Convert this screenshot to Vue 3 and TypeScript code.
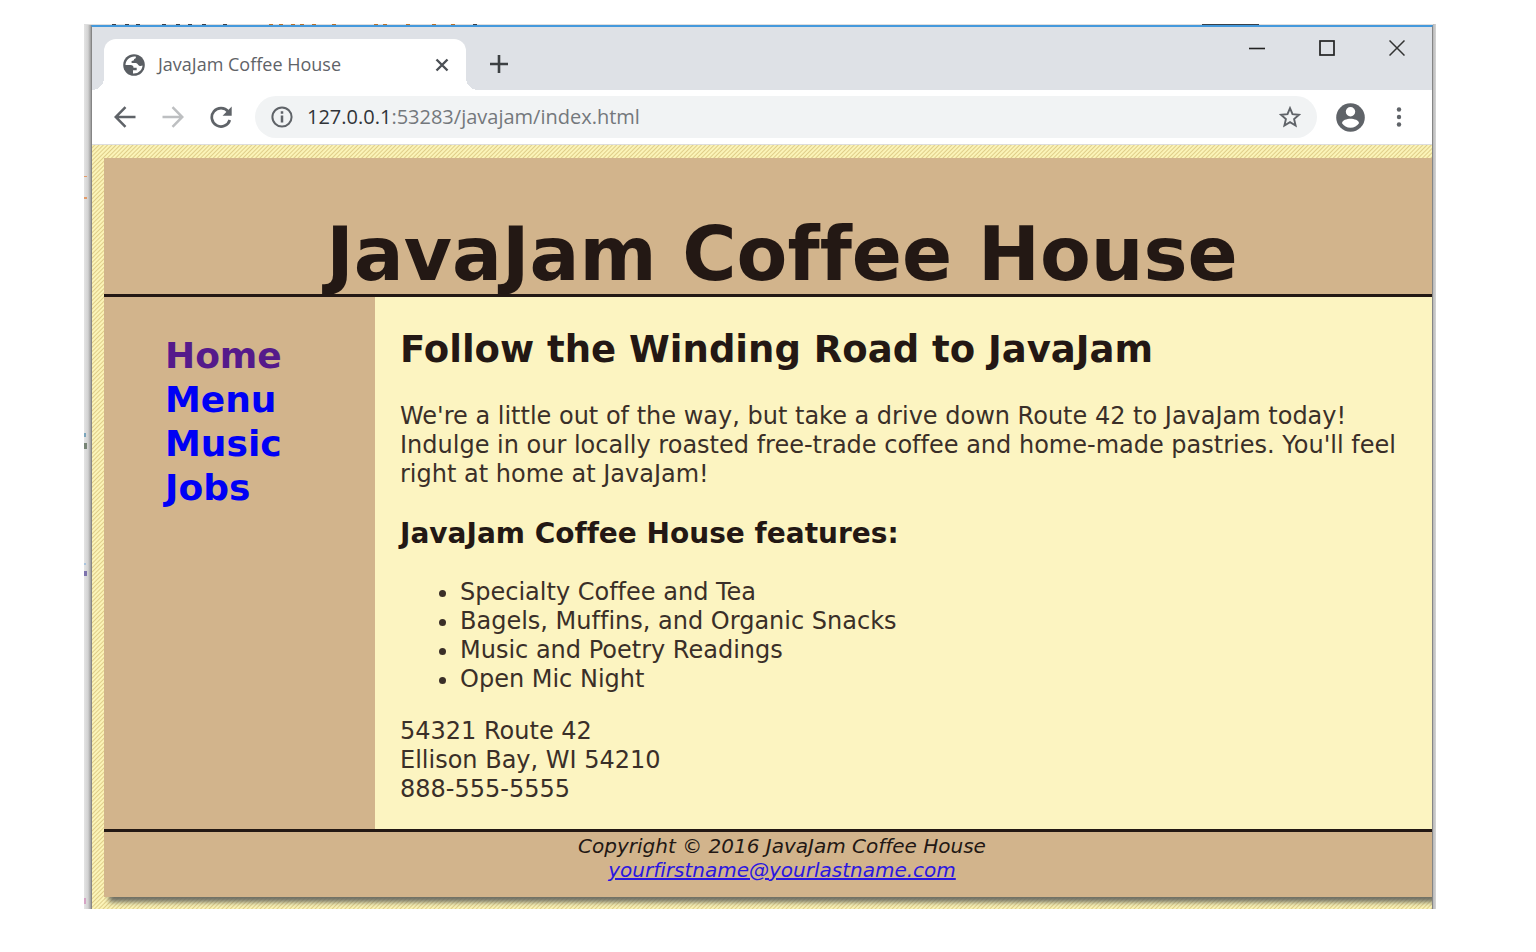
<script setup lang="ts">
interface Fragment { x: number; y: number; w: number; h: number; color: string }

const navLinks = [
  { label: 'Home', visited: true },
  { label: 'Menu', visited: false },
  { label: 'Music', visited: false },
  { label: 'Jobs', visited: false },
]
const features = [
  'Specialty Coffee and Tea',
  'Bagels, Muffins, and Organic Snacks',
  'Music and Poetry Readings',
  'Open Mic Night',
]
const topFragments: Fragment[] = [
  ...[28, 41, 52, 78, 92, 104, 118, 139, 389].map((x) => ({ x, y: 0, w: 4, h: 2, color: '#3b3f46' })),
  ...[185, 195, 207, 216, 228, 248, 290, 299, 322, 348, 367].map((x) => ({ x, y: 0, w: 4, h: 2, color: '#b8712a' })),
]
const sideFragments: Fragment[] = [
  { x: 0, y: 152, w: 3, h: 1, color: '#e39a68' },
  { x: 0, y: 173, w: 3, h: 2, color: '#e39a68' },
  { x: 0, y: 409, w: 2, h: 4, color: '#7ba5bb' },
  { x: 0, y: 419, w: 3, h: 6, color: '#778475' },
  { x: 0, y: 539, w: 2, h: 2, color: '#a9c4de' },
  { x: 0, y: 547, w: 3, h: 5, color: '#7d73ad' },
  { x: 0, y: 874, w: 2, h: 6, color: '#d5a3c4' },
]
</script>

<template>
  <div class="desktop">
    <svg class="behind" aria-hidden="true">
      <rect v-for="(f, i) in sideFragments" :key="i" :x="f.x" :y="f.y" :width="f.w" :height="f.h" :fill="f.color" />
    </svg>
    <div class="sliver">
      <svg width="480" height="2" aria-hidden="true">
        <rect v-for="(f, i) in topFragments" :key="i" :x="f.x" :y="f.y" :width="f.w" :height="f.h" :fill="f.color" />
      </svg>
      <span class="sliver-dark"></span>
    </div>
    <div class="window">
      <header class="tabstrip">
        <div class="tab">
          <svg width="22" height="22" viewBox="0 0 22 22" aria-hidden="true">
            <circle cx="11" cy="11" r="10.8" fill="#5a5e63" />
            <path d="M13 2.700C7.500 1.800 2.600 5.800 2.500 11H7.500c2 0 3 1 3 2.800h3.200v2.500H10v3.200c5.300.4 9.400-3.500 9.500-8-1.600.8-3.400.6-4.400-.8-1-1.400-2-1.600-3.600-1.600H8.600V6.900c1.900 0 2.600-.6 2.500-1.900 1 0 1.800-1 1.900-2.300Z" fill="#fff" />
          </svg>
          <span class="tab-title">JavaJam Coffee House</span>
          <button class="icon" aria-label="Close tab">
            <svg width="14" height="14" viewBox="0 0 14 14"><path d="M1.500 1.500l11 11M12.500 1.500l-11 11" stroke="#4c5055" stroke-width="2.400" /></svg>
          </button>
        </div>
        <button class="icon new-tab" aria-label="New tab">
          <svg width="18" height="18" viewBox="0 0 18 18"><path d="M9 0v18M0 9h18" stroke="#3c4043" stroke-width="2.600" /></svg>
        </button>
        <div class="controls">
          <button class="icon" aria-label="Minimize">
            <svg width="16" height="16" viewBox="0 0 16 16"><path d="M0 8.500h16" stroke="#222" stroke-width="1.600" /></svg>
          </button>
          <button class="icon" aria-label="Maximize">
            <svg width="16" height="16" viewBox="0 0 16 16"><rect x="1" y="1" width="14" height="14" fill="none" stroke="#222" stroke-width="1.700" /></svg>
          </button>
          <button class="icon" aria-label="Close window">
            <svg width="16" height="16" viewBox="0 0 16 16"><path d="M.5.5l15 15M15.500.5l-15 15" stroke="#333" stroke-width="1.500" /></svg>
          </button>
        </div>
      </header>

      <div class="toolbar">
        <button class="icon" aria-label="Back">
          <svg width="22" height="22" viewBox="0 0 22 22"><path d="M21.500 11H2M11.500 1.200L1.700 11l9.800 9.800" fill="none" stroke="#5f6368" stroke-width="2.500" /></svg>
        </button>
        <button class="icon" aria-label="Forward">
          <svg width="22" height="22" viewBox="0 0 22 22"><path d="M.5 11H20M10.500 1.200l9.800 9.800-9.800 9.800" fill="none" stroke="#bdbfc1" stroke-width="2.500" /></svg>
        </button>
        <button class="icon" aria-label="Reload">
          <svg width="22" height="22" viewBox="0 0 22 22"><path d="M18.200 5.600A9.200 9.200 0 1 0 19.800 14" fill="none" stroke="#5f6368" stroke-width="2.700" /><path d="M21.700.6v9.100h-9.100Z" fill="#5f6368" /></svg>
        </button>
        <div class="omnibox">
          <svg width="22" height="22" viewBox="0 0 22 22" aria-hidden="true"><circle cx="11" cy="11" r="9.600" fill="none" stroke="#5f6368" stroke-width="2" /><path d="M11 9.500v7M11 5.300v2.400" stroke="#5f6368" stroke-width="2.500" /></svg>
          <a class="url" href="#"><b>127.0.0.1</b>:53283/javajam/index.html</a>
          <button class="icon" aria-label="Bookmark this page">
            <svg width="22" height="22" viewBox="0 0 22 22"><path d="M11 2.200l2.500 6 6.500.6-4.900 4.300 1.500 6.400L11 16.100l-5.600 3.400 1.500-6.400L2 8.800l6.500-.6Z" fill="none" stroke="#5f6368" stroke-width="1.900" /></svg>
          </button>
        </div>
        <button class="icon" aria-label="Profile">
          <svg width="29" height="29" viewBox="0 0 29 29"><circle cx="14.500" cy="14.500" r="14.300" fill="#5f6368" /><circle cx="14.500" cy="8.800" r="4.700" fill="#fff" /><path d="M6 20.200c0-2.900 4.900-4.400 8.500-4.400s8.500 1.500 8.500 4.400c-1.800 2.700-4.900 4.500-8.500 4.500s-6.700-1.800-8.500-4.500Z" fill="#fff" /></svg>
        </button>
        <button class="icon more" aria-label="Menu">
          <svg width="6" height="20" viewBox="0 0 6 20"><g fill="#5f6368"><circle cx="3" cy="2.500" r="2.200" /><circle cx="3" cy="10" r="2.200" /><circle cx="3" cy="17.500" r="2.200" /></g></svg>
        </button>
      </div>

      <div class="page">
        <div class="wrapper">
          <header class="banner"><h1>JavaJam Coffee House</h1></header>
          <div class="columns">
            <nav>
              <a v-for="link in navLinks" :key="link.label" href="#" :class="{ visited: link.visited }">{{ link.label }}</a>
            </nav>
            <main>
              <h2>Follow the Winding Road to JavaJam</h2>
              <p>We're a little out of the way, but take a drive down Route 42 to JavaJam today!<br>Indulge in our locally roasted free-trade coffee and home-made pastries. You'll feel<br>right at home at JavaJam!</p>
              <h3>JavaJam Coffee House features:</h3>
              <ul>
                <li v-for="feature in features" :key="feature">{{ feature }}</li>
              </ul>
              <address>54321 Route 42<br>Ellison Bay, WI 54210<br>888-555-5555</address>
            </main>
          </div>
          <footer>
            Copyright © 2016 JavaJam Coffee House<br>
            <a href="#">yourfirstname@yourlastname.com</a>
          </footer>
        </div>
      </div>
    </div>
  </div>
</template>

<style>
body { background: #fff; }
</style>

<style scoped>
.desktop {
  position: relative;
  margin: 24px 100px 0 84px;
  padding: 0 3px 0 7px;
  background: linear-gradient(to right, #e4e4e4 0, #d2d2d2 4px, #9b9b9b 7px, #b8b8b8 calc(100% - 3px), #d5d5d5 100%);
}
.behind { position: absolute; left: 0; top: 0; width: 7px; height: 100%; }
.sliver {
  display: flex;
  justify-content: space-between;
  height: 1px;
  overflow: hidden;
  margin-left: -7px;
  background: #dedede;
}
.sliver-dark { width: 57px; height: 2px; margin-right: 174px; background: #3a4047; }
.window {
  border: 1px solid #858585;
  border-top: 2px solid #4499dc;
  border-bottom: 0;
  background: #fff;
}
.icon { display: flex; flex: none; padding: 0; border: 0; background: none; }
.tabstrip {
  display: flex;
  align-items: flex-start;
  height: 63px;
  padding-left: 12px;
  background: #dee1e6;
}
.tab {
  position: relative;
  display: flex;
  align-items: center;
  box-sizing: border-box;
  width: 362px;
  height: 51px;
  margin-top: 12px;
  padding: 0 17px 0 19px;
  border-radius: 12px 12px 0 0;
  background: #fff;
}
.tab::before,
.tab::after { content: ''; position: absolute; bottom: 0; width: 12px; height: 12px; }
.tab::before { left: -12px; background: radial-gradient(circle at 0 0, #dee1e6 12px, #fff 12px); }
.tab::after { right: -12px; background: radial-gradient(circle at 100% 0, #dee1e6 12px, #fff 12px); }
.tab-title {
  flex: 1;
  margin-left: 13px;
  padding-bottom: 2px;
  font: 18px/24px "Open Sans", "Noto Sans", sans-serif;
  color: #5f6368;
}
.new-tab { margin: 28px 0 0 24px; }
.controls { display: flex; gap: 54px; margin: 13px 27px 0 auto; }
.toolbar {
  display: flex;
  align-items: center;
  height: 54px;
  padding: 0 30px 0 22px;
  border-bottom: 1px solid #dcdddf;
}
.toolbar > .icon + .icon { margin-left: 26px; }
.toolbar > .icon.more { margin-left: 31px; }
.omnibox {
  display: flex;
  flex: 1;
  align-items: center;
  height: 42px;
  margin: 0 19px 0 23px;
  padding: 0 16px;
  border-radius: 21px;
  background: #f1f3f4;
}
.url {
  flex: 1;
  margin-left: 14px;
  font: 20px/28px "Open Sans", "Noto Sans", sans-serif;
  color: #74787c;
  text-decoration: none;
}
.url b { font-weight: 400; color: #303438; }
.page {
  padding: 13px 0 12px 12px;
  background: repeating-linear-gradient(135deg, #fbf4b8 0, #fbf4b8 1px, #dfcd89 2px, #fbf4b8 3px);
  font-family: "DejaVu Sans", Verdana, sans-serif;
  font-variant-ligatures: none;
  color: #231814;
}
.wrapper { background: #d2b48c; box-shadow: 5px 5px 5px #6e6e64; clip-path: inset(0 0 -12px 0); }
.banner { padding: 56px 0 0 28px; border-bottom: 3px solid #231814; text-align: center; }
h1, h2, h3, p, ul { margin: 0; }
h1 { font-size: 74px; line-height: 80px; }
.columns { display: flex; }
nav {
  display: flex;
  flex: none;
  flex-direction: column;
  box-sizing: border-box;
  width: 271px;
  padding: 37px 0 0 61px;
  font-size: 36px;
  font-weight: 700;
  line-height: 44px;
}
nav a { color: #0000f5; text-decoration: none; }
nav a.visited { color: #551a8b; }
main {
  flex: 1;
  padding: 31px 0 25px 25px;
  background: #fcf4c1;
  font-size: 24px;
  line-height: 29px;
}
main p, main li, address { color: #3a2f28; }
h2 { font-size: 37px; line-height: 44px; }
p { margin-top: 30px; white-space: nowrap; }
h3 { margin-top: 28px; font-size: 28px; line-height: 34px; }
ul { margin-top: 27px; padding-left: 60px; }
address { margin-top: 23px; font-style: normal; }
footer {
  padding: 2px 0 15px 28px;
  border-top: 3px solid #231814;
  font-size: 20px;
  font-style: italic;
  line-height: 24px;
  text-align: center;
}
footer a { color: #2a16e0; }
</style>
